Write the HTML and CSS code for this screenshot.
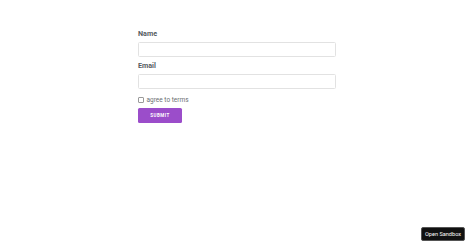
FILE: index.html
```html
<!DOCTYPE html>
<html>
<head>
<meta charset="utf-8">
<link rel="stylesheet" href="styles.css">
</head>
<body>
<form class="form">
  <label class="label" for="name">Name</label>
  <input class="input" id="name" type="text">
  <label class="label" for="email">Email</label>
  <input class="input" id="email" type="text">
  <div class="check-row">
    <input class="check" type="checkbox" id="terms">
    <label class="check-label" for="terms">agree to terms</label>
  </div>
  <button class="submit" type="button">Submit</button>
</form>
<a class="sandbox">Open Sandbox</a>
</body>
</html>
```
FILE: styles.css
```css
html, body {
  margin: 0;
  padding: 0;
  background: #fff;
  font-family: Roboto, "Liberation Sans", sans-serif;
}
.form {
  width: 198px;
  margin: 0 auto;
  padding-top: 29px;
  display: flex;
  flex-direction: column;
}
.label {
  display: block;
  font-size: 7.2px;
  line-height: 10px;
  height: 10px;
  font-weight: 700;
  color: #555b61;
  margin-bottom: 3px;
}
.input {
  box-sizing: border-box;
  width: 198px;
  height: 15px;
  margin: 0 0 4px 0;
  border: 1px solid #e2e2e2;
  border-radius: 1.5px;
  background: #fff;
  padding: 0;
}
.check-row {
  display: flex;
  align-items: center;
  height: 10px;
  margin-top: 2px;
  margin-bottom: 3px;
}
.check {
  -webkit-appearance: none;
  appearance: none;
  box-sizing: border-box;
  width: 5.5px;
  height: 5.5px;
  margin: 0 3px 0 0;
  border: 0.7px solid #9a9a9a;
  border-radius: 1px;
  background: #fff;
}
.check-label {
  font-size: 6.5px;
  line-height: 10px;
  color: #6b6f73;
}
.submit {
  width: 44px;
  height: 15px;
  border: 0;
  border-radius: 1.5px;
  background: #9b4dca;
  color: #fff;
  font-family: Roboto, "Liberation Sans", sans-serif;
  font-size: 4.5px;
  font-weight: 700;
  letter-spacing: 0.45px;
  text-transform: uppercase;
  padding: 0;
  cursor: pointer;
}
.sandbox {
  position: fixed;
  right: 9px;
  bottom: 7px;
  width: 44px;
  height: 14px;
  box-sizing: border-box;
  background: #111;
  color: #fff;
  border-radius: 2px;
  font-size: 5.6px;
  line-height: 13px;
  text-align: center;
  border: 0.5px solid #555;
}
```
